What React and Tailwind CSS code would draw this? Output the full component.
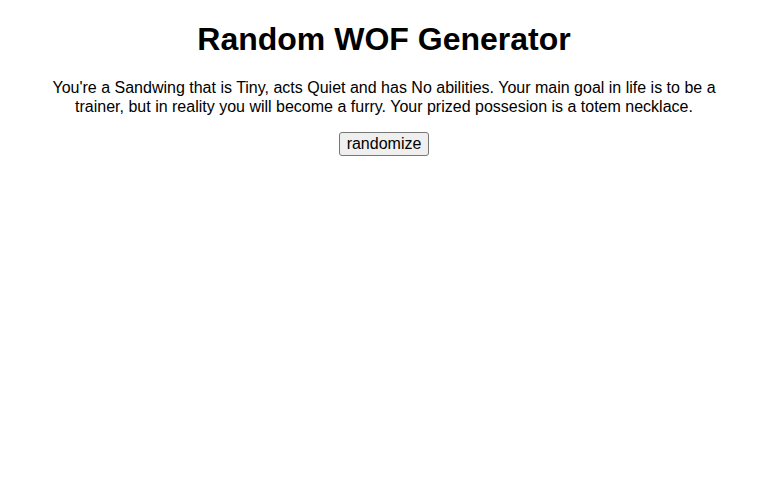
import { useState } from "react";

const tribes = ["Sandwing", "Mudwing", "Skywing", "Seawing", "Rainwing", "Icewing", "Nightwing", "Silkwing", "Hivewing", "Leafwing"];
const sizes = ["Tiny", "Small", "Average", "Big", "Huge"];
const moods = ["Quiet", "Loud", "Shy", "Bossy", "Friendly", "Grumpy"];
const abilities = ["No", "Animus", "Mind-reading", "Prophecy", "Fire"];
const goals = ["trainer", "queen", "scholar", "soldier", "healer"];
const fates = ["a furry", "a hermit", "famous", "a villain", "a legend"];
const items = ["totem necklace", "scroll", "dragonbite viper", "shiny rock", "crown"];

const pick = (arr) => arr[Math.floor(Math.random() * arr.length)];

export default function App() {
  const [dragon, setDragon] = useState({
    tribe: "Sandwing",
    size: "Tiny",
    mood: "Quiet",
    ability: "No",
    goal: "trainer",
    fate: "a furry",
    item: "totem necklace",
  });

  function randomize() {
    setDragon({
      tribe: pick(tribes),
      size: pick(sizes),
      mood: pick(moods),
      ability: pick(abilities),
      goal: pick(goals),
      fate: pick(fates),
      item: pick(items),
    });
  }

  return (
    <div className="min-h-screen bg-white px-2 text-center text-black font-['Liberation_Sans',Arial,sans-serif]">
      <h1 className="pt-[21px] text-[32px] leading-[37px] font-bold">
        Random WOF Generator
      </h1>
      <p className="mx-auto mt-[21px] max-w-[690px] text-base leading-[18.5px]">
        You're a {dragon.tribe} that is {dragon.size}, acts {dragon.mood} and
        has {dragon.ability} abilities. Your main goal in life is to be a{" "}
        {dragon.goal}, but in reality you will become {dragon.fate}. Your prized
        possesion is a {dragon.item}.
      </p>
      <div className="mt-4">
        <button
          onClick={randomize}
          className="rounded-[3px] border border-[#767676] bg-[#efefef] px-[7px] py-[2px] text-base leading-[18px] hover:bg-[#e5e5e5]"
        >
          randomize
        </button>
      </div>
    </div>
  );
}
